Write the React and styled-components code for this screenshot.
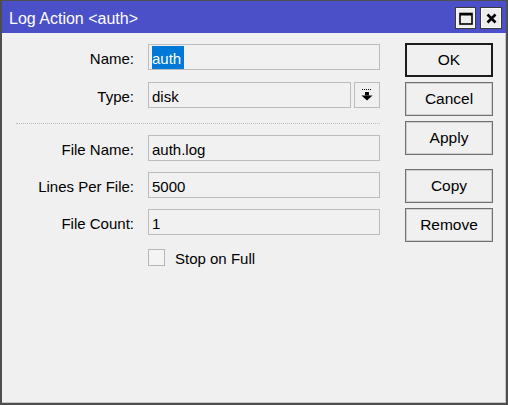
import React from "react";
import styled, { createGlobalStyle } from "styled-components";

const GlobalStyle = createGlobalStyle`
  html, body {
    margin: 0;
    padding: 0;
    background: #f0f0f0;
  }
  body {
    font-family: "Liberation Sans", Arial, sans-serif;
    font-size: 15px;
    color: #000;
  }
`;

const Window = styled.div`
  width: 508px;
  height: 405px;
  box-sizing: border-box;
  border: 2px solid #4e4e4e;
  border-top-width: 1px;
  background: #f0f0f0;
  display: flex;
  flex-direction: column;
`;

const TitleBar = styled.div`
  height: 32px;
  flex: none;
  background: #4b50c9;
  display: flex;
  align-items: center;
  padding: 0 4px 0 7px;
`;

const Title = styled.div`
  flex: 1;
  color: #fff;
  font-size: 16px;
  padding-top: 3px;
`;

const CaptionButtons = styled.div`
  display: flex;
  gap: 4px;
  padding-top: 2px;
`;

const CaptionButton = styled.div`
  width: ${p => p.$w || 21}px;
  height: 22px;
  box-sizing: border-box;
  border: 1px solid #3a3a3a;
  background: #ededed;
  box-shadow: inset 0 0 0 1px #fafafa;
  display: flex;
  align-items: center;
  justify-content: center;
`;

const Body = styled.div`
  flex: 1;
  display: flex;
  align-items: flex-start;
  gap: 25px;
  padding: 10px 13px 0 14px;
  box-shadow: inset -1px -1px 0 #c4c4c4;
`;

const Form = styled.div`
  width: 364px;
  margin-top: 1px;
  display: flex;
  flex-direction: column;
`;

const Row = styled.div`
  display: grid;
  grid-template-columns: 118px 232px;
  column-gap: 14px;
  align-items: center;
  height: ${p => p.$h || 26}px;
  margin-top: ${p => p.$gap || 0}px;
`;

const Label = styled.div`
  text-align: right;
  padding-top: 3px;
  white-space: nowrap;
`;

const Field = styled.div`
  display: flex;
  gap: 3px;
  height: 100%;
`;

const Input = styled.div`
  flex: 1;
  height: 26px;
  box-sizing: border-box;
  border: 1px solid #bcbcbc;
  background: #f1f1f1;
  padding: 2px 0 0 3px;
  display: flex;
  align-items: center;
  white-space: nowrap;
`;

const Selected = styled.span`
  background: #0078d7;
  color: #fff;
  line-height: 21px;
  padding-right: 3px;
  margin-top: -2px;
  padding-top: 2px;
`;

const DropButton = styled.div`
  width: 26px;
  height: 26px;
  box-sizing: border-box;
  border: 1px solid #bcbcbc;
  background: #f0f0f0;
  display: flex;
  align-items: center;
  justify-content: center;
`;

const Separator = styled.div`
  border-top: 1px dotted #bdbdbd;
  margin: 15px 0 11px;
`;

const CheckWrap = styled.div`
  display: flex;
  align-items: center;
  gap: 10px;
`;

const CheckBox = styled.div`
  width: 17px;
  height: 17px;
  box-sizing: border-box;
  border: 1px solid #b5b5b5;
  background: #f4f4f4;
`;

const CheckLabel = styled.span`
  padding-top: 3px;
`;

const Buttons = styled.div`
  width: 88px;
  display: flex;
  flex-direction: column;
  gap: 5px;
`;

const Button = styled.div`
  height: 34px;
  box-sizing: border-box;
  border: ${p => (p.$default ? "2px solid #1c1c1c" : "1px solid #707070")};
  box-shadow: ${p => (p.$default ? "none" : "inset 0 0 0 1px #cfcfcf")};
  background: #f0f0f0;
  font-size: 15.5px;
  display: flex;
  align-items: center;
  justify-content: center;
  margin-top: ${p => p.$gap || 0}px;
`;

const MaxIcon = () => (
  <svg width="14" height="13" viewBox="0 0 14 13">
    <rect x="1" y="1.5" width="12" height="10.5" fill="none" stroke="#000" strokeWidth="1.6" />
    <rect x="1" y="1" width="12" height="2.5" fill="#000" />
  </svg>
);

const CloseIcon = () => (
  <svg width="11" height="11" viewBox="0 0 11 11">
    <path d="M1.5 1.5 L9.5 9.5 M9.5 1.5 L1.5 9.5" stroke="#000" strokeWidth="2.6" />
  </svg>
);

const DropIcon = () => (
  <svg width="12" height="12" viewBox="0 0 12 12">
    <path d="M1 0.5 H11" stroke="#000" strokeWidth="1" strokeDasharray="1 1" />
    <rect x="4" y="3" width="4" height="3.5" fill="#000" />
    <path d="M0.5 6.5 H11.5 L6 11.5 Z" fill="#000" />
  </svg>
);

const fields = [
  { label: "File Name:", value: "auth.log" },
  { label: "Lines Per File:", value: "5000" },
  { label: "File Count:", value: "1" },
];

export default function App() {
  return (
    <>
      <GlobalStyle />
      <Window>
        <TitleBar>
          <Title>Log Action &lt;auth&gt;</Title>
          <CaptionButtons>
            <CaptionButton>
              <MaxIcon />
            </CaptionButton>
            <CaptionButton $w={22}>
              <CloseIcon />
            </CaptionButton>
          </CaptionButtons>
        </TitleBar>
        <Body>
          <Form>
            <Row>
              <Label>Name:</Label>
              <Field>
                <Input>
                  <Selected>auth</Selected>
                </Input>
              </Field>
            </Row>
            <Row $gap={12}>
              <Label>Type:</Label>
              <Field>
                <Input>disk</Input>
                <DropButton>
                  <DropIcon />
                </DropButton>
              </Field>
            </Row>
            <Separator />
            {fields.map((f, i) => (
              <Row key={f.label} $gap={i ? 11 : 0}>
                <Label>{f.label}</Label>
                <Field>
                  <Input>{f.value}</Input>
                </Field>
              </Row>
            ))}
            <Row $gap={12} $h={17}>
              <span />
              <CheckWrap>
                <CheckBox />
                <CheckLabel>Stop on Full</CheckLabel>
              </CheckWrap>
            </Row>
          </Form>
          <Buttons>
            <Button $default>OK</Button>
            <Button>Cancel</Button>
            <Button>Apply</Button>
            <Button $gap={9}>Copy</Button>
            <Button>Remove</Button>
          </Buttons>
        </Body>
      </Window>
    </>
  );
}
